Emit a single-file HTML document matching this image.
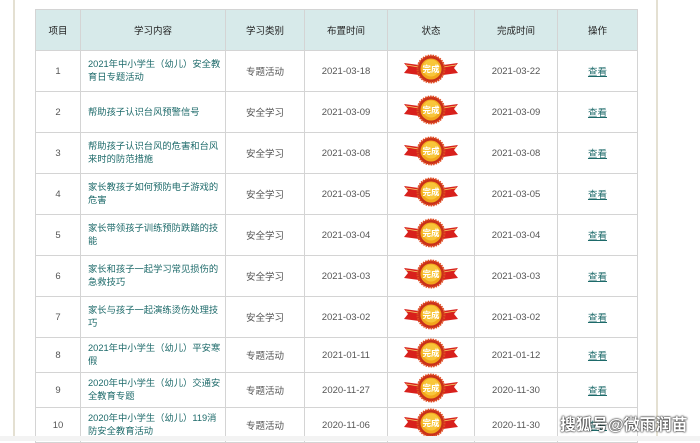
<!DOCTYPE html>
<html><head><meta charset="utf-8"><style>
html,body{margin:0;padding:0;}
body{width:700px;height:441px;overflow:hidden;background:#fff;position:relative;font-family:"Liberation Sans","Noto Sans CJK SC",sans-serif;}
.lbar{position:absolute;left:13px;top:0;width:2px;height:441px;background:#e4e0d2;}
.rbar{position:absolute;left:656px;top:0;width:2px;height:441px;background:#e4e0d2;}
.bot{position:absolute;left:0;top:436px;width:700px;height:5px;background:#f3f3f3;}
table{position:absolute;left:35px;top:9px;border-collapse:collapse;table-layout:fixed;width:602px;}
td,th{border:1px solid #d4d4d4;font-size:9.5px;text-align:center;padding:0;color:#555;}
th{background:#d7eaea;height:40px;color:#222;font-weight:normal;}
td{height:40px;}
tr.s td{height:34px;}
td.c{text-align:left;color:#1d6a6a;padding:0 0 0 7px;line-height:13px;font-size:9.3px;white-space:nowrap;overflow:hidden;}
a{color:#1d6a6a;text-decoration:underline;}
.wm{position:absolute;left:560px;top:411px;font-size:16px;color:#fff;font-weight:bold;text-shadow:0 0 2px #000,0 0 1px #000;}
</style></head><body>
<div class="lbar"></div><div class="rbar"></div>
<svg width="0" height="0" style="position:absolute"><defs>
<g id="m">
<path d="M1 9 L16 11 L16 21 L1 19 L5 14 Z" fill="#d8201c"/>
<path d="M55 9 L40 11 L40 21 L55 19 L51 14 Z" fill="#d8201c"/>
<path d="M3 11 L16 13 M53 11 L40 13" stroke="#f6d36a" stroke-width="0.8"/>
<circle cx="28" cy="15" r="13.5" fill="#c8301a" stroke="#e04a20" stroke-width="2" stroke-dasharray="1.5 1"/>
<circle cx="28" cy="15" r="10.5" fill="#f2a51c"/>
<circle cx="28" cy="14" r="8.5" fill="#f8c63a"/>
<text x="28" y="18" font-size="8.5" fill="#fff" text-anchor="middle" font-family="Noto Sans CJK SC,sans-serif" font-weight="bold">完成</text>
</g></defs></svg>
<table>
<colgroup><col style="width:45px"><col style="width:145px"><col style="width:79px"><col style="width:83px"><col style="width:87px"><col style="width:83px"><col style="width:80px"></colgroup>
<tr><th>项目</th><th>学习内容</th><th>学习类别</th><th>布置时间</th><th>状态</th><th>完成时间</th><th>操作</th></tr>
<tr><td>1</td><td class="c">2021年中小学生（幼儿）安全教<br>育日专题活动</td><td>专题活动</td><td>2021-03-18</td><td><svg width="56" height="31"><use href="#m"/></svg></td><td>2021-03-22</td><td><a>查看</a></td></tr>
<tr><td>2</td><td class="c">帮助孩子认识台风预警信号</td><td>安全学习</td><td>2021-03-09</td><td><svg width="56" height="31"><use href="#m"/></svg></td><td>2021-03-09</td><td><a>查看</a></td></tr>
<tr><td>3</td><td class="c">帮助孩子认识台风的危害和台风<br>来时的防范措施</td><td>安全学习</td><td>2021-03-08</td><td><svg width="56" height="31"><use href="#m"/></svg></td><td>2021-03-08</td><td><a>查看</a></td></tr>
<tr><td>4</td><td class="c">家长教孩子如何预防电子游戏的<br>危害</td><td>安全学习</td><td>2021-03-05</td><td><svg width="56" height="31"><use href="#m"/></svg></td><td>2021-03-05</td><td><a>查看</a></td></tr>
<tr><td>5</td><td class="c">家长带领孩子训练预防跌踏的技<br>能</td><td>安全学习</td><td>2021-03-04</td><td><svg width="56" height="31"><use href="#m"/></svg></td><td>2021-03-04</td><td><a>查看</a></td></tr>
<tr><td>6</td><td class="c">家长和孩子一起学习常见损伤的<br>急救技巧</td><td>安全学习</td><td>2021-03-03</td><td><svg width="56" height="31"><use href="#m"/></svg></td><td>2021-03-03</td><td><a>查看</a></td></tr>
<tr><td>7</td><td class="c">家长与孩子一起演练烫伤处理技<br>巧</td><td>安全学习</td><td>2021-03-02</td><td><svg width="56" height="31"><use href="#m"/></svg></td><td>2021-03-02</td><td><a>查看</a></td></tr>
<tr class="s"><td>8</td><td class="c">2021年中小学生（幼儿）平安寒<br>假</td><td>专题活动</td><td>2021-01-11</td><td><svg width="56" height="31"><use href="#m"/></svg></td><td>2021-01-12</td><td><a>查看</a></td></tr>
<tr class="s"><td>9</td><td class="c">2020年中小学生（幼儿）交通安<br>全教育专题</td><td>专题活动</td><td>2020-11-27</td><td><svg width="56" height="31"><use href="#m"/></svg></td><td>2020-11-30</td><td><a>查看</a></td></tr>
<tr class="s"><td>10</td><td class="c">2020年中小学生（幼儿）119消<br>防安全教育活动</td><td>专题活动</td><td>2020-11-06</td><td><svg width="56" height="31"><use href="#m"/></svg></td><td>2020-11-30</td><td><a>查看</a></td></tr>
</table>
<div class="bot"></div>
<div class="wm">搜狐号@微雨润苗</div>
</body></html>
